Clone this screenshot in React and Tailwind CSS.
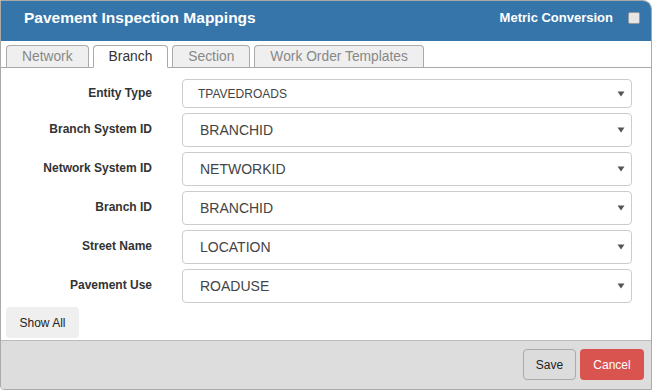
import React, { useState } from "react";

const rows = [
  { label: "Entity Type", value: "TPAVEDROADS", small: true },
  { label: "Branch System ID", value: "BRANCHID" },
  { label: "Network System ID", value: "NETWORKID" },
  { label: "Branch ID", value: "BRANCHID" },
  { label: "Street Name", value: "LOCATION" },
  { label: "Pavement Use", value: "ROADUSE" },
];

const tabs = ["Network", "Branch", "Section", "Work Order Templates"];

const Caret = () => (
  <svg width="8" height="6" viewBox="0 0 8 6" className="shrink-0">
    <path d="M0.5 0.5 L7.5 0.5 L4 5.5 Z" fill="#555" />
  </svg>
);

const SelectRow = ({ label, value, small }) => (
  <div className="flex items-center">
    <div className="w-[152px] shrink-0 text-right text-[12px] font-bold text-[#333] pr-[1px] -mt-[2px]">
      {label}
    </div>
    <div
      className={`ml-[29px] flex-1 flex items-center justify-between border border-[#ccc] rounded-[4px] bg-white pr-[6px] ${
        small ? "h-[29px] pl-[15px] text-[12px]" : "h-[34px] pl-[17px] text-[14px]"
      } text-[#444]`}
    >
      <span>{value}</span>
      <Caret />
    </div>
  </div>
);

export default function App() {
  const [active, setActive] = useState(1);
  const [metric, setMetric] = useState(false);

  return (
    <div
      className="w-[653px] h-[390px] bg-white overflow-hidden"
      style={{ fontFamily: '"Liberation Sans", Arial, sans-serif' }}
    >
      <div className="w-[652px] h-[390px] flex flex-col border border-[#aaa] rounded-tr-[9px] rounded-bl-[4px] overflow-hidden">
        {/* Header */}
        <div className="h-[40px] shrink-0 bg-[#3675a9] flex items-center justify-between pl-[23px] pr-[11px]">
          <h1 className="text-white font-bold text-[15.5px] -mt-[6px]">
            Pavement Inspection Mappings
          </h1>
          <label className="flex items-center -mt-[6px] text-white font-bold text-[13px]">
            Metric Conversion
            <span
              onClick={() => setMetric(!metric)}
              className="ml-[15px] w-[12px] h-[12px] rounded-[2px] border border-[#999] bg-[#e6e6e6] inline-block"
            ></span>
          </label>
        </div>

        {/* Tabs */}
        <div className="flex items-end gap-[4px] pl-[5px] pt-[5px] border-b border-[#aaa] h-[27px] shrink-0">
          {tabs.map((t, i) => (
            <button
              key={t}
              onClick={() => setActive(i)}
              className={`px-[15px] text-[13.8px] border border-[#aaa] rounded-t-[4px] leading-none ${
                active === i
                  ? "bg-white text-[#333] border-b-white -mb-[1px] h-[23px]"
                  : "bg-[#efefef] text-[#888] border-b-0 h-[22px]"
              }`}
            >
              {t}
            </button>
          ))}
        </div>

        {/* Body */}
        <div className="flex-1 flex flex-col pt-[11px] pr-[19px] gap-[5px]">
          {rows.map((r) => (
            <SelectRow key={r.label} {...r} />
          ))}
        </div>
        <div className="pl-[5px] pb-[2px]">
          <button className="w-[73px] h-[31px] bg-[#efefef] rounded-[4px] text-[12px] text-[#222]">
            Show All
          </button>
        </div>

        {/* Footer */}
        <div className="h-[49px] shrink-0 bg-[#dddddd] border-t border-[#bbb] flex items-center justify-end gap-[4px] pr-[7px] pb-[1px]">
          <button className="w-[53px] h-[31px] border border-[#aaa] rounded-[4px] bg-[#dcdcdc] text-[12px] text-[#222]">
            Save
          </button>
          <button className="w-[64px] h-[31px] rounded-[4px] bg-[#d9534f] text-[12px] text-white">
            Cancel
          </button>
        </div>
      </div>
    </div>
  );
}
